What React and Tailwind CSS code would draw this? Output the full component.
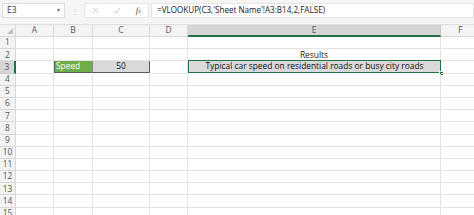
import React from "react";

const cols = [
  { key: "A", w: "w-[38px]" },
  { key: "B", w: "w-[39px]" },
  { key: "C", w: "w-[57px]" },
  { key: "D", w: "w-[38px]" },
  { key: "E", w: "w-[253px]" },
  { key: "F", w: "w-[40px]" },
];

const rows = Array.from({ length: 15 }, (_, i) => i + 1);

function Cell({ col, row }) {
  const base = `${col.w} h-full shrink-0 border-r border-b border-[#e3e3e3] relative`;
  if (row === 2 && col.key === "E") {
    return <div className={`${base} flex items-center justify-center text-[#1a1a1a]`}>Results</div>;
  }
  if (row === 3 && col.key === "B") {
    return (
      <div className={`${col.w} h-full shrink-0 bg-[#70ad47] border border-[#5a5a5a] border-r-[#8a8a8a] text-white flex items-center pl-[1px] -mt-px`}>
        Speed
      </div>
    );
  }
  if (row === 3 && col.key === "C") {
    return (
      <div className={`${col.w} h-full shrink-0 bg-[#d9d9d9] border border-l-0 border-[#5a5a5a] text-[#111] flex items-center justify-center -mt-px`}>
        50
      </div>
    );
  }
  if (row === 3 && col.key === "E") {
    return (
      <div className={`${col.w} h-full shrink-0 bg-[#d9d9d9] border-[1.5px] border-[#217346] text-[#111] flex items-center justify-center relative -mt-px`}>
        Typical car speed on residential roads or busy city roads
        <span className="absolute -right-[4px] -bottom-[4px] w-[5px] h-[5px] bg-[#217346] border border-white" />
      </div>
    );
  }
  return <div className={base} />;
}

export default function App() {
  return (
    <div className="w-[474px] h-[215px] overflow-hidden bg-white text-[8.4px] leading-none font-['Open_Sans',sans-serif] select-none">
      {/* Formula bar */}
      <div className="h-[25px] bg-[#f5f5f5] flex items-start pt-[3px] border-b border-[#dedede]">
        <div className="ml-[2px] w-[63px] h-[15px] bg-white border border-[#dcdcdc] flex items-center justify-between pl-[4px] pr-[3px] text-[#333]">
          <span>E3</span>
          <span className="text-[5px] text-[#666]">▼</span>
        </div>
        <div className="w-[19px] h-[15px] flex items-center justify-center text-[#c4c4c4] text-[8px]">⋮</div>
        <div className="w-[65px] h-[15px] bg-white border border-[#e6e6e6] flex items-center justify-around">
          <svg width="7" height="7" viewBox="0 0 8 8"><path d="M1 1 L7 7 M7 1 L1 7" stroke="#c8c8c8" strokeWidth="1" /></svg>
          <svg width="8" height="7" viewBox="0 0 9 8"><path d="M1 4.5 L3.5 7 L8 1" stroke="#c8c8c8" strokeWidth="1" fill="none" /></svg>
          <span className="italic text-[#555] font-['Liberation_Serif',serif] text-[9px]">f<span className="text-[6px]">x</span></span>
        </div>
        <div className="ml-[2px] flex-1 h-[15px] bg-white border border-[#e6e6e6] flex items-center pl-[5px] text-[#1a1a1a] text-[8.1px]">
          =VLOOKUP(C3,'Sheet Name'!A3:B14,2,FALSE)
        </div>
      </div>

      {/* Column headers */}
      <div className="h-[12px] flex bg-[#f3f3f3]">
        <div className="w-[16px] h-full shrink-0 border-r border-b border-[#d8d8d8] relative">
          <span className="absolute right-[2px] bottom-[2px] w-0 h-0 border-l-[6px] border-l-transparent border-b-[6px] border-b-[#c0c0c0]" />
        </div>
        {cols.map((c) => (
          <div
            key={c.key}
            className={`${c.w} h-full shrink-0 flex items-center justify-center border-r text-[#555] ${
              c.key === "E"
                ? "bg-[#d6d6d6] border-b-2 border-b-[#217346] border-r-[#c4c4c4] text-[#3a3a3a]"
                : "border-b border-[#d8d8d8]"
            }`}
          >
            {c.key}
          </div>
        ))}
      </div>

      {/* Grid rows */}
      {rows.map((r) => (
        <div key={r} className="h-[12.2px] flex">
          <div
            className={`w-[16px] h-full shrink-0 flex items-center justify-center text-[#555] border-b ${
              r === 3
                ? "bg-[#d6d6d6] border-r-2 border-r-[#217346] border-b-[#cccccc] text-[#3a3a3a]"
                : "bg-[#f3f3f3] border-r border-[#d8d8d8]"
            }`}
          >
            {r}
          </div>
          {cols.map((c) => (
            <Cell key={c.key} col={c} row={r} />
          ))}
        </div>
      ))}
    </div>
  );
}
